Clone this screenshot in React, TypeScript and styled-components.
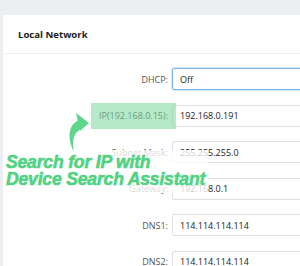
import React from 'react';
import styled, { createGlobalStyle } from 'styled-components';

const GlobalStyle = createGlobalStyle`
  body {
    margin: 0;
    background: #eceef1;
    font-family: 'Open Sans', 'Noto Sans', sans-serif;
  }
`;

const Page = styled.div`
  position: relative;
  width: 300px;
  height: 266px;
  overflow: hidden;
  padding: 15px 0 0 3px;
  box-sizing: border-box;
`;

const Card = styled.div`
  width: 330px;
  height: 300px;
  background: #fff;
`;

const Header = styled.div`
  height: 38px;
  display: flex;
  align-items: center;
  padding-left: 15px;
  border-bottom: 1px solid #eef0f2;
  font-size: 9.6px;
  font-weight: 700;
  color: #222;
`;

const Form = styled.div`
  display: flex;
  flex-direction: column;
  gap: 14.6px;
  padding-top: 14px;
`;

const Row = styled.div`
  display: grid;
  grid-template-columns: 165px 1fr;
  column-gap: 4px;
  align-items: center;
`;

const Label = styled.span`
  text-align: right;
  font-size: 9px;
  color: #555;
`;

interface InputProps {
  focused?: boolean;
}
const Field = styled.div<InputProps>`
  height: 22px;
  box-sizing: border-box;
  display: flex;
  align-items: center;
  padding-left: 7px;
  font-size: 9px;
  color: #222;
  border: 1px solid ${props => (props.focused ? '#7db5ec' : '#dcdfe4')};
  box-shadow: ${props => (props.focused ? '0 0 0 1px #d6e8fa' : 'none')};
  border-radius: 2px;
`;

const Highlight = styled.div`
  position: absolute;
  left: 91px;
  top: 103px;
  width: 85px;
  height: 26px;
  background: rgba(120, 215, 155, 0.55);
`;

const Callout = styled.div`
  position: absolute;
  left: 3px;
  top: 150px;
  width: 205px;
  height: 43px;
  background: rgba(255, 255, 255, 0.78);
  box-sizing: border-box;
  padding: 4px 0 0 3px;
  font-family: 'Liberation Sans', Arial, sans-serif;
  font-weight: 700;
  font-style: italic;
  font-size: 17.6px;
  line-height: 17px;
  letter-spacing: -0.2px;
  color: #52d283;
  -webkit-text-stroke: 0.6px #52d283;
  white-space: nowrap;
`;

const Arrow = styled.svg`
  position: absolute;
  left: 62px;
  top: 110px;
`;

const rows = [
  { label: 'DHCP:', value: 'Off', focused: true },
  { label: 'IP(192.168.0.15):', value: '192.168.0.191' },
  { label: 'Subnet Mask:', value: '255.255.255.0' },
  { label: 'Gateway:', value: '192.168.0.1' },
  { label: 'DNS1:', value: '114.114.114.114' },
  { label: 'DNS2:', value: '114.114.114.114' },
];

const App = () => (
  <>
    <GlobalStyle />
    <Page>
      <Card>
        <Header>Local Network</Header>
        <Form>
          {rows.map(r => (
            <Row key={r.label}>
              <Label>{r.label}</Label>
              <Field focused={r.focused}>{r.value}</Field>
            </Row>
          ))}
        </Form>
      </Card>
      <Highlight />
      <Arrow width="30" height="44" viewBox="0 0 30 44">
        <path d="M18 10 C9 12 3 24 12 42 C10 31 11 22 20 19 Z" fill="#5fd68c" />
        <polygon points="14,3 27,13 18,21" fill="#5fd68c" />
      </Arrow>
      <Callout>
        Search for IP with
        <br />
        Device Search Assistant
      </Callout>
    </Page>
  </>
);

export default App;
